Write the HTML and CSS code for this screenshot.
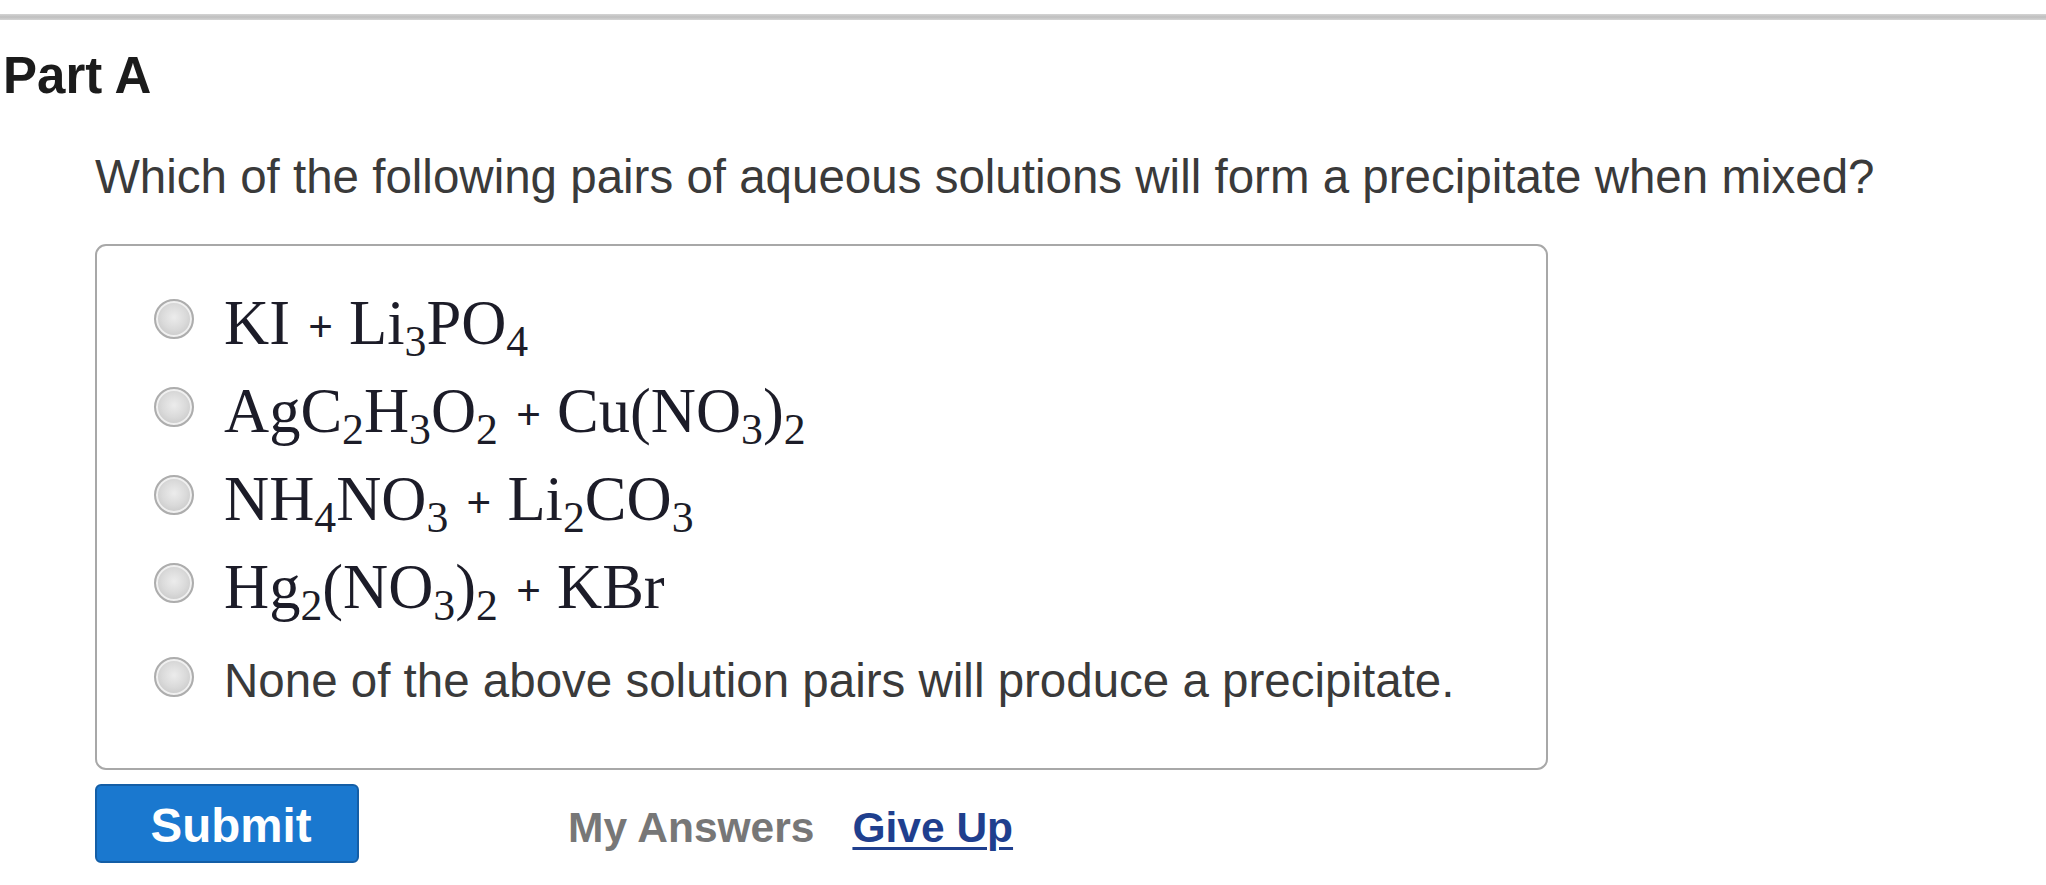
FILE: index.html
```html
<!DOCTYPE html>
<html lang="en">
<head>
<meta charset="utf-8">
<title>Part A</title>
<link rel="stylesheet" href="styles.css">
</head>
<body>
<div class="topline"></div>
<h2 class="part-title">Part A</h2>
<div class="content">
  <p class="question">Which of the following pairs of aqueous solutions will form a precipitate when mixed?</p>
  <div class="choices">
    <label class="choice formula"><input type="radio" name="ans" class="radio"><span class="chem">KI<span class="plus">+</span>Li<sub>3</sub>PO<sub>4</sub></span></label>
    <label class="choice formula"><input type="radio" name="ans" class="radio"><span class="chem">AgC<sub>2</sub>H<sub>3</sub>O<sub>2</sub><span class="plus">+</span>Cu(NO<sub>3</sub>)<sub>2</sub></span></label>
    <label class="choice formula"><input type="radio" name="ans" class="radio"><span class="chem">NH<sub>4</sub>NO<sub>3</sub><span class="plus">+</span>Li<sub>2</sub>CO<sub>3</sub></span></label>
    <label class="choice formula"><input type="radio" name="ans" class="radio"><span class="chem">Hg<sub>2</sub>(NO<sub>3</sub>)<sub>2</sub><span class="plus">+</span>KBr</span></label>
    <label class="choice plain"><input type="radio" name="ans" class="radio"><span class="text">None of the above solution pairs will produce a precipitate.</span></label>
  </div>
  <div class="actions">
    <button type="button" class="submit">Submit</button>
    <span class="my-answers">My Answers</span>
    <a class="give-up" href="#">Give Up</a>
  </div>
</div>
</body>
</html>
```
FILE: styles.css
```css
html, body {
  margin: 0;
  padding: 0;
  background: #ffffff;
}
body {
  font-family: "Liberation Sans", Arial, sans-serif;
  color: #333333;
}
.topline {
  height: 6px;
  margin-top: 14px;
  background: linear-gradient(#d4d4d4, #bfbfbf 50%, #d4d4d4);
}
.part-title {
  margin: 30px 0 0 0;
  padding-left: 3px;
  font-size: 51px;
  line-height: 51px;
  font-weight: bold;
  color: #1b1b1b;
}
.content {
  margin-left: 95px;
}
.question {
  margin: 52px 0 0 0;
  font-size: 47.5px;
  line-height: 47.5px;
  white-space: nowrap;
  color: #3a3a3a;
}
.choices {
  margin-top: 43px;
  width: 1453px;
  box-sizing: border-box;
  border: 2px solid #a8a8a8;
  border-radius: 11px;
  padding: 33px 0 43px 57px;
}
.choice {
  display: flex;
  align-items: flex-start;
  height: 88px;
  line-height: 88px;
  white-space: nowrap;
}
.choice.plain {
  margin-top: 6px;
}
.radio {
  appearance: none;
  -webkit-appearance: none;
  flex: none;
  width: 40px;
  height: 40px;
  margin: 20px 30px 0 0;
  box-sizing: border-box;
  border-radius: 50%;
  border: 2px solid #adadad;
  background: radial-gradient(circle at 50% 45%, #ececec 0, #dadada 45%, #cccccc 70%, #e4e4e4 100%);
  box-shadow: inset 0 0 0 2px #f0f0f0;
}
.chem {
  font-family: "Liberation Serif", "Times New Roman", serif;
  font-size: 62.5px;
  color: #1c1c28;
}
.chem sub {
  font-size: 0.7em;
  line-height: 0;
  vertical-align: -12px;
}
.plus {
  font-size: 44px;
  font-weight: bold;
  vertical-align: 3px;
  margin: 0 16px 0 18px;
}
.text {
  font-size: 47.5px;
  color: #3a3a3a;
}
.actions {
  display: flex;
  align-items: baseline;
  margin-top: 14px;
}
.submit {
  width: 264px;
  height: 79px;
  box-sizing: border-box;
  border: 2px solid #145ea6;
  border-radius: 6px;
  background: #1a78cf;
  color: #ffffff;
  font-family: "Liberation Sans", Arial, sans-serif;
  font-weight: bold;
  font-size: 47.5px;
  line-height: 71px;
  padding: 4px 0 0 8px;
  text-align: center;
}
.my-answers {
  margin-left: 209px;
  font-size: 42.5px;
  font-weight: bold;
  color: #777777;
}
.give-up {
  margin-left: 38px;
  font-size: 42.5px;
  font-weight: bold;
  color: #1f3f8e;
  text-decoration: underline;
  text-decoration-thickness: 3px;
  text-underline-offset: 5px;
}
```
